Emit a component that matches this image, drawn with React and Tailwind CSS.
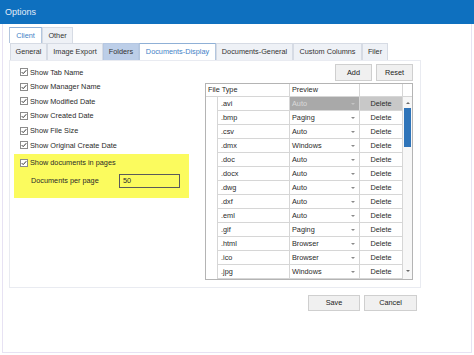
import React from 'react';

const rows = [
  ['.avi', 'Auto'],
  ['.bmp', 'Paging'],
  ['.csv', 'Auto'],
  ['.dmx', 'Windows'],
  ['.doc', 'Auto'],
  ['.docx', 'Auto'],
  ['.dwg', 'Auto'],
  ['.dxf', 'Auto'],
  ['.eml', 'Auto'],
  ['.gif', 'Paging'],
  ['.html', 'Browser'],
  ['.ico', 'Browser'],
  ['.jpg', 'Windows'],
];

const checks = [
  'Show Tab Name',
  'Show Manager Name',
  'Show Modified Date',
  'Show Created Date',
  'Show File Size',
  'Show Original Create Date',
];

function CheckBox() {
  return (
    <svg width="8" height="8" viewBox="0 0 8 8" className="shrink-0">
      <rect x="0.5" y="0.5" width="7" height="7" fill="#fff" stroke="#8c8c8c" />
      <path d="M1.7 4.1 L3.2 5.6 L6.3 2.2" fill="none" stroke="#333" strokeWidth="1" />
    </svg>
  );
}

function Arrow({ color = '#8a8a8a' }) {
  return (
    <svg width="4" height="2" viewBox="0 0 4 2" className="shrink-0">
      <polygon points="0,0 4,0 2,2" fill={color} />
    </svg>
  );
}

function Tab({ label, selected, hover }) {
  let cls = 'border-[#d6dbe4] bg-[#eef1f6] text-[#333]';
  if (selected) cls = 'border-[#b3c6de] border-t-[#8fb0d6] bg-white text-[#3f82c6]';
  if (hover) cls = 'border-[#b5c7e2] bg-[#bccee8] text-[#333]';
  return (
    <div className={`flex h-full items-center justify-center border border-b-0 ${cls}`}>{label}</div>
  );
}

function Btn({ label, w, h = 'h-[17px]' }) {
  return (
    <div
      className={`flex items-center justify-center border border-[#cfcfcf] bg-[#f0f0f0] text-[#222] ${w} ${h}`}
    >
      {label}
    </div>
  );
}

export default function App() {
  return (
    <div className="h-[355px] w-[474px] overflow-hidden bg-white font-['Liberation_Sans',Arial,sans-serif] text-[7.3px] leading-none text-[#2a2a2a]">
      <div className="flex h-[24px] items-center bg-[#0e70bf] pl-[5px] text-[9px] text-[#e3edf8]">Options</div>
      <div className="ml-[2px] flex h-[329px] w-[470px] flex-col border-x border-b border-[#e7e2f3] pl-[6px] pt-[3px]">
        <div className="flex h-[16px]">
          <div className="w-[33px]"><Tab label="Client" selected /></div>
          <div className="w-[31px]"><Tab label="Other" /></div>
        </div>
        <div className="ml-[1px] flex h-[17px]">
          <div className="w-[37px]"><Tab label="General" /></div>
          <div className="w-[56px]"><Tab label="Image Export" /></div>
          <div className="w-[36px]"><Tab label="Folders" hover /></div>
          <div className="w-[77px]"><Tab label="Documents-Display" selected /></div>
          <div className="w-[77px]"><Tab label="Documents-General" /></div>
          <div className="w-[69px]"><Tab label="Custom Columns" /></div>
          <div className="w-[26px]"><Tab label="Filer" /></div>
        </div>
        <div className="flex h-[228px] w-[412px] border border-[#e9ebf1]">
          <div className="flex flex-col pl-[4px] pt-[4px]">
            {checks.map((c) => (
              <div key={c} className="flex h-[14.6px] items-center gap-[2px] pl-[6px]">
                <CheckBox />
                <span>{c}</span>
              </div>
            ))}
            <div className="mt-[1px] flex h-[44px] w-[175px] flex-col bg-[#fbfb5e] pt-[2px]">
              <div className="flex h-[14px] items-center gap-[2px] pl-[6px]">
                <CheckBox />
                <span>Show documents in pages</span>
              </div>
              <div className="mt-[4px] flex h-[14px] items-center pl-[17px]">
                <span className="w-[88px]">Documents per page</span>
                <div className="flex h-[14px] w-[61px] items-center border border-[#5a5a5a] bg-[#fbfb5e] pl-[3px]">50</div>
              </div>
            </div>
          </div>
          <div className="ml-auto flex flex-col items-end pr-[7px] pt-[3px]">
            <div className="flex gap-[4px]">
              <Btn label="Add" w="w-[37px]" />
              <Btn label="Reset" w="w-[37px]" />
            </div>
            <div className="mt-[2px] flex h-[197px] w-[208px] overflow-hidden border border-[#b4b4b4] bg-white">
              <div className="flex w-[197px] flex-col">
                <div className="flex h-[13px] shrink-0 border-b border-[#d6d6d6]">
                  <div className="flex w-[84px] items-center border-r border-[#d6d6d6] pl-[2px]">File Type</div>
                  <div className="flex w-[70px] items-center border-r border-[#d6d6d6] pl-[2px]">Preview</div>
                  <div className="w-[43px] border-r border-[#d6d6d6]" />
                </div>
                {rows.map(([ext, prev], i) => {
                  const sel = i === 0;
                  return (
                    <div key={ext} className="flex h-[14px] shrink-0">
                      <div className="w-[12px] border-r border-[#d6d6d6]" />
                      <div className="flex w-[72px] items-center border-r border-b border-[#d6d6d6] pl-[3px]">{ext}</div>
                      <div
                        className={`flex w-[70px] items-center justify-between border-r border-b border-[#d6d6d6] pl-[2px] pr-[4px] ${
                          sel ? 'bg-[#a9a9a9] text-[#dadada]' : ''
                        }`}
                      >
                        <span>{prev}</span>
                        <Arrow color={sel ? '#c4c4c4' : '#8a8a8a'} />
                      </div>
                      <div
                        className={`flex w-[43px] items-center justify-center border-r border-b border-[#d6d6d6] ${
                          sel ? 'bg-[#c8c8c8]' : ''
                        }`}
                      >
                        Delete
                      </div>
                    </div>
                  );
                })}
              </div>
              <div className="flex w-[9px] flex-col">
                <div className="h-[13px] shrink-0 border-b border-[#d6d6d6]" />
                <div className="flex flex-1 flex-col items-center bg-[#f7f7f7] pt-[5px]">
                  <svg width="4" height="2" viewBox="0 0 4 2">
                    <polygon points="0,2 4,2 2,0" fill="#6a6a6a" />
                  </svg>
                  <div className="mt-[4px] h-[39px] w-[7px] bg-[#2f74b9]" />
                  <div className="mt-auto mb-[7px]">
                    <Arrow color="#6a6a6a" />
                  </div>
                </div>
              </div>
            </div>
          </div>
        </div>
        <div className="mt-[7px] flex w-[412px] justify-end gap-[4px] pr-[4px]">
          <Btn label="Save" w="w-[52px]" h="h-[16px]" />
          <Btn label="Cancel" w="w-[53px]" h="h-[16px]" />
        </div>
      </div>
    </div>
  );
}
